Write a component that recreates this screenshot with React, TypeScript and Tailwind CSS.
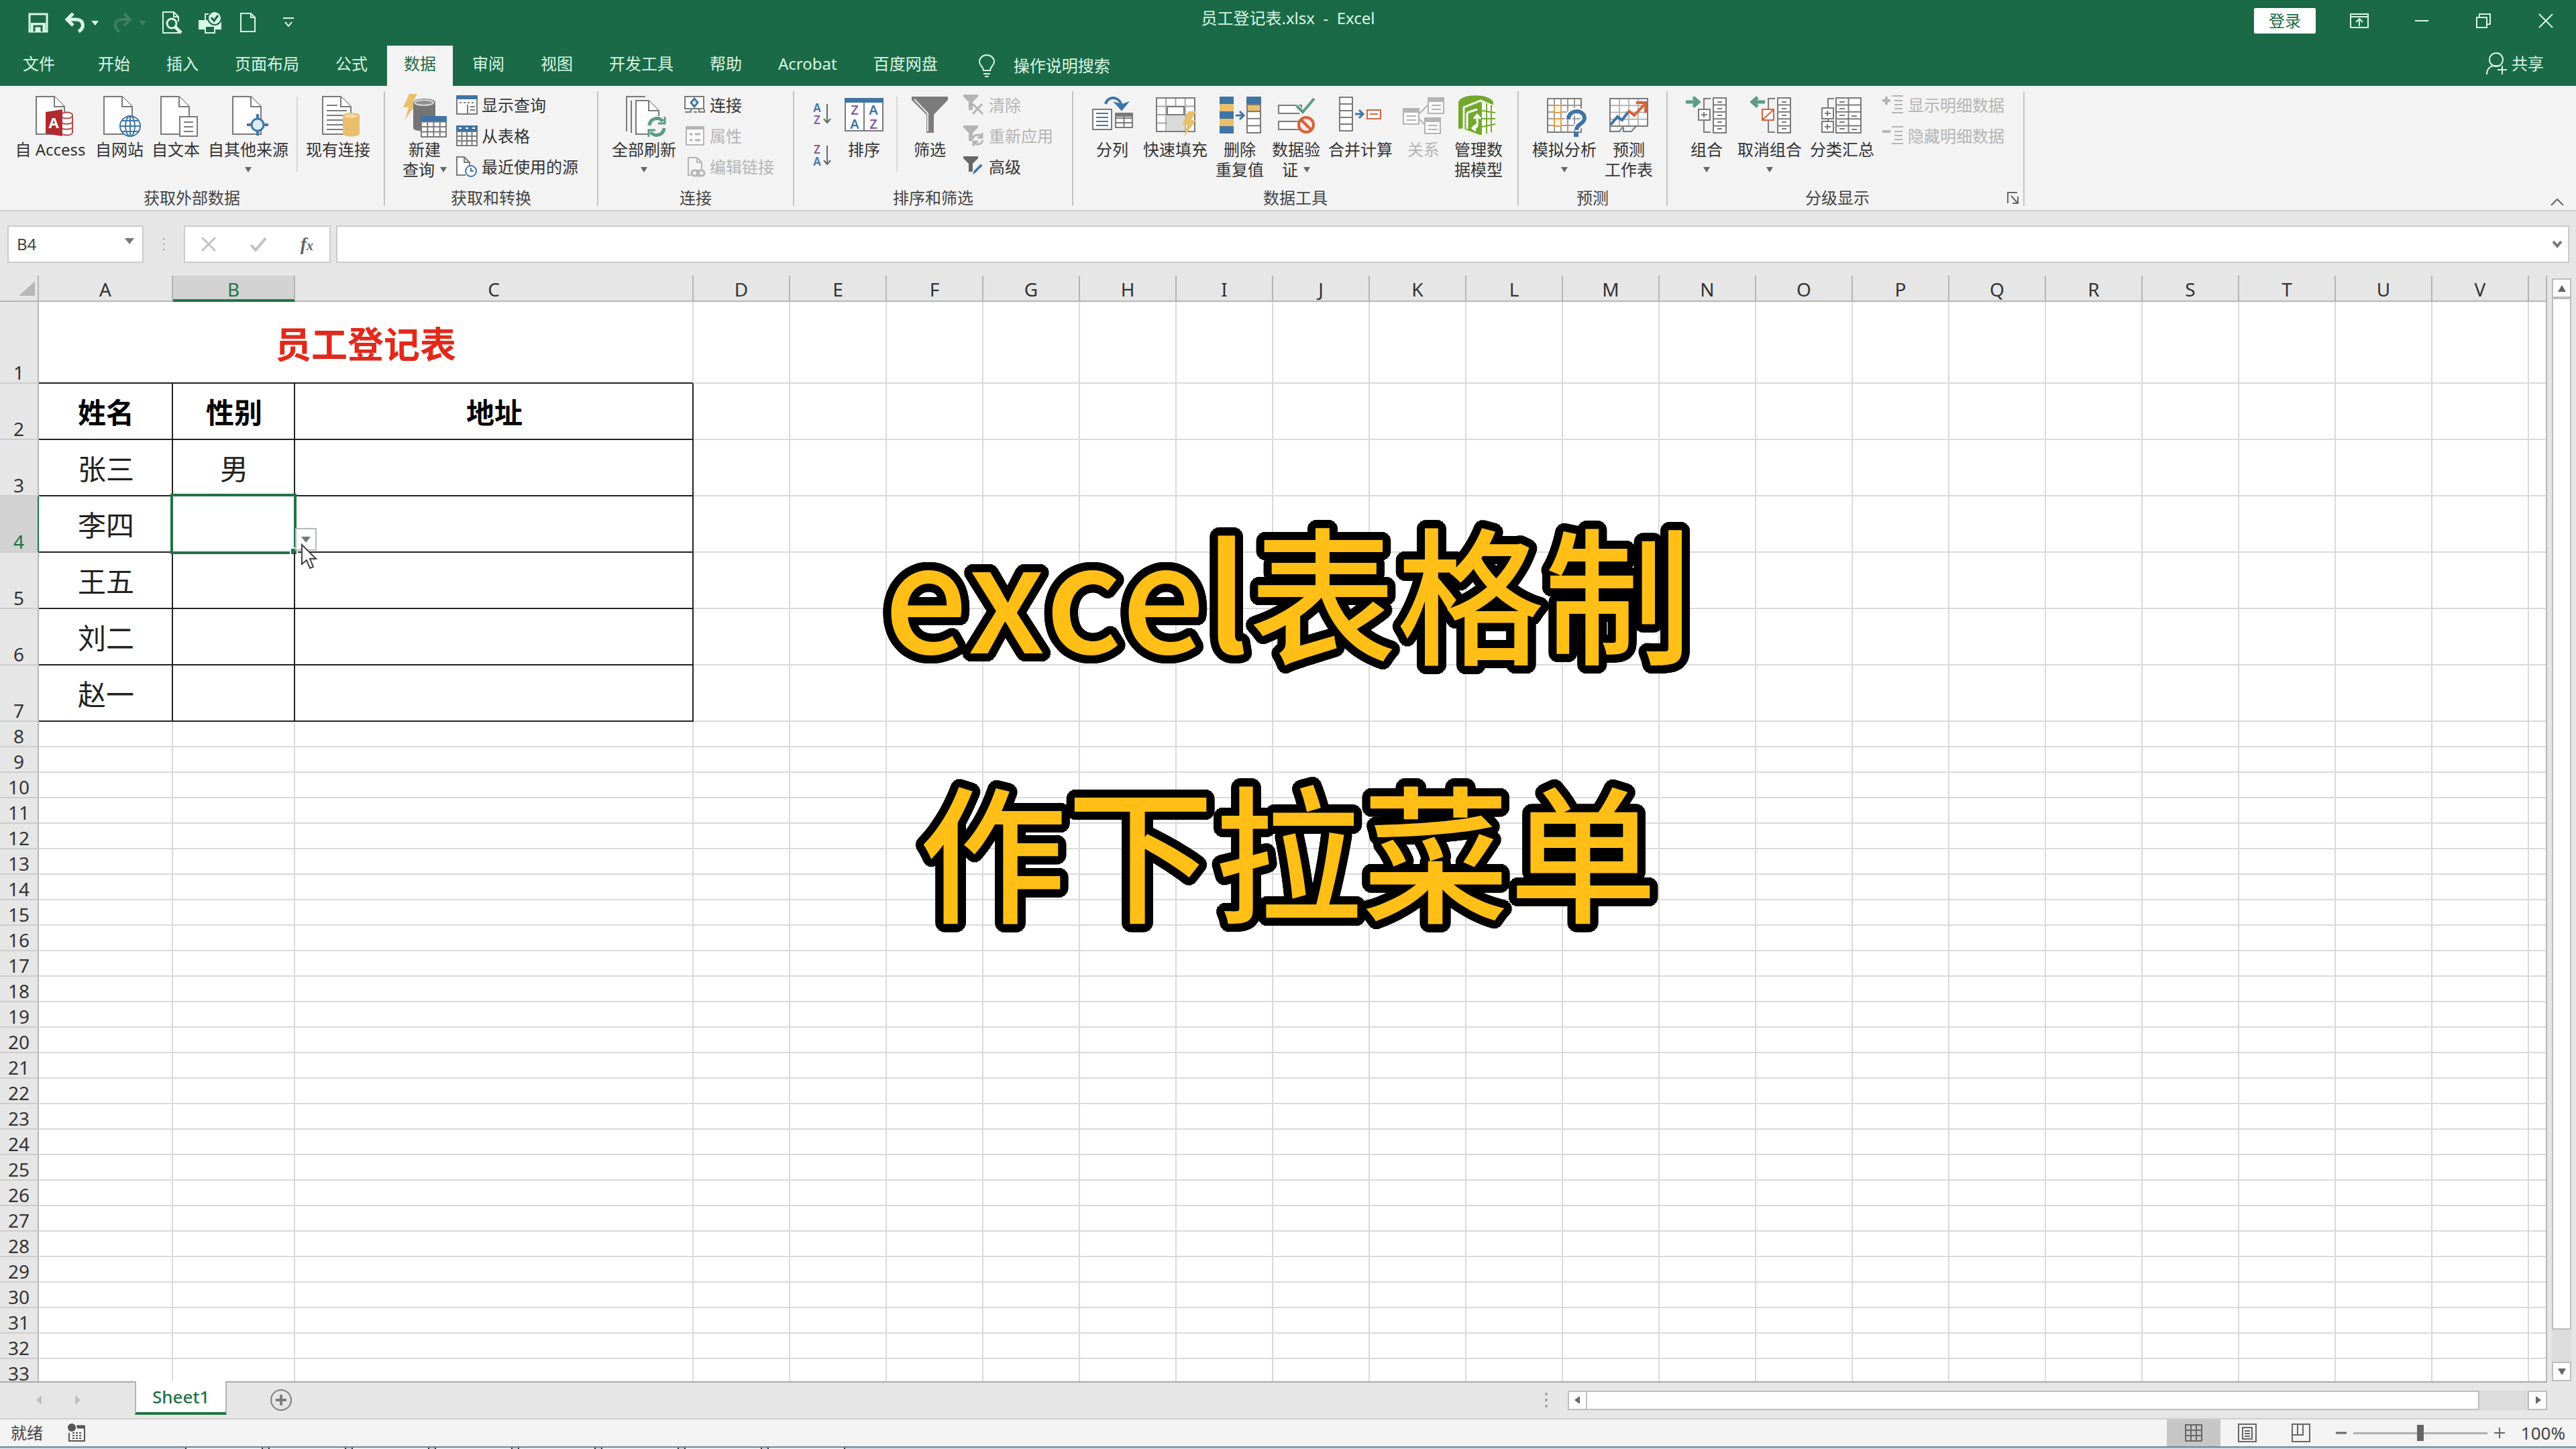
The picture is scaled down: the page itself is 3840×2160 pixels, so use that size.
import type { ReactNode } from "react";

const GRAY = "#7a7a7a";
const BLUE = "#3f74a6";
const GREEN = "#5c9c86";
const ORANGE = "#d4623b";
const YELLOW = "#e9bf6c";
const PALE = "#b4b4b4";

/* ---------- icon building blocks ---------- */

const Icon = ({ children, size = 64 }: { children: ReactNode; size?: number }) => (
	<svg
		width={size}
		height={size}
		viewBox={`0 0 ${size} ${size}`}
		fill="none"
		stroke={GRAY}
		strokeWidth={2}
		className="shrink-0 overflow-visible"
		aria-hidden="true"
	>
		{children}
	</svg>
);

const Doc = ({ x = 9, y = 4, w = 42, h = 56 }) => (
	<g fill="#fff">
		<path d={`M${x} ${y}h${w - 15}l15 15v${h - 15}h-${w}z`} />
		<path d={`M${x + w - 15} ${y}v15h15`} />
	</g>
);

const Lines = ({ x, y, w, n, gap, color = GRAY }: { x: number; y: number; w: number; n: number; gap: number; color?: string }) => (
	<path d={Array.from({ length: n }, (_, i) => `M${x} ${y + i * gap}h${w}`).join("")} stroke={color} />
);

const Grid = ({ x, y, w, h, cols, rows, color = GRAY }: { x: number; y: number; w: number; h: number; cols: number; rows: number; color?: string }) => (
	<g stroke={color}>
		<rect x={x} y={y} width={w} height={h} fill="#fff" />
		{Array.from({ length: cols - 1 }, (_, i) => (
			<path key={`c${i}`} d={`M${x + ((i + 1) * w) / cols} ${y}v${h}`} />
		))}
		{Array.from({ length: rows - 1 }, (_, i) => (
			<path key={`r${i}`} d={`M${x} ${y + ((i + 1) * h) / rows}h${w}`} />
		))}
	</g>
);

const SmallArrow = ({ x, y }: { x: number; y: number }) => (
	<path d={`M${x} ${y}h12M${x + 6} ${y - 6}l6 6l-6 6`} stroke={BLUE} strokeWidth={3} />
);

const Letter = ({ x, y, color, size = 20, children }: { x: number; y: number; color: string; size?: number; children: string }) => (
	<text x={x} y={y} fontSize={size} fontWeight={600} fill={color} stroke="none" textAnchor="middle">
		{children}
	</text>
);

const Bolt = ({ x, y, s = 1 }: { x: number; y: number; s?: number }) => (
	<path transform={`translate(${x} ${y}) scale(${s})`} d="M9 0h12l-7 13h7L3 38l5-18H0z" fill={YELLOW} stroke="none" />
);

const Caret = () => (
	<svg width="10" height="8" viewBox="0 0 10 8" className="inline-block shrink-0" aria-hidden="true">
		<path d="M0 0h10l-5 8z" fill="#666" />
	</svg>
);

/* ---------- large ribbon icons ---------- */

const AccessIcon = () => (
	<Icon>
		<Doc x={11} />
		<g stroke="#b34a4a" fill="#fff">
			<path d="M48 32c0-6 17-6 17 0v25c0 6-17 6-17 0z" />
			<path d="M48 32c0 6 17 6 17 0M48 41c0 5 17 5 17 0M48 49c0 5 17 5 17 0" fill="none" />
		</g>
		<path d="M25 27l25-4v40l-25-4z" fill="#b12a2e" stroke="none" />
		<text x={37} y={51} fontSize={22} fontWeight={700} fill="#fff" stroke="none" textAnchor="middle">A</text>
	</Icon>
);

const WebIcon = () => (
	<Icon>
		<Doc />
		<g stroke={BLUE}>
			<circle cx={48} cy={48} r={15} fill="#fff" />
			<ellipse cx={48} cy={48} rx={7} ry={15} />
			<path d="M48 33v30M33 48h30M36 40h24M36 56h24" />
		</g>
	</Icon>
);

const TextIcon = () => (
	<Icon>
		<Doc x={10} />
		<rect x={38} y={34} width={26} height={29} fill="#fff" />
		<Lines x={44} y={42} w={14} n={3} gap={7} />
	</Icon>
);

const OtherSourceIcon = () => (
	<Icon>
		<Doc />
		<path d="M46 30v32M30 46h32" stroke={BLUE} strokeWidth={4} />
		<circle cx={46} cy={46} r={9} fill="#dcecf7" stroke={BLUE} strokeWidth={3} />
	</Icon>
);

const ExistingIcon = () => (
	<Icon>
		<Doc />
		<Lines x={15} y={17} w={16} n={1} gap={7} />
		<Lines x={15} y={25} w={30} n={5} gap={7} />
		<path d="M39 32c0-5 25-5 25 0v27c0 6-25 6-25 0z" fill={YELLOW} stroke="none" />
		<ellipse cx={51} cy={33} rx={10} ry={3} fill="#f3d9a0" stroke="none" />
	</Icon>
);

const NewQueryIcon = () => (
	<Icon>
		<Bolt x={0} y={0} />
		<path d="M15 13c0-8 33-8 33 0v38c0 6-33 6-33 0z" fill="#757575" stroke="none" />
		<ellipse cx={31} cy={13} rx={14} ry={4} fill="#8f8f8f" stroke="#d9d9d9" />
		<Grid x={27} y={34} w={37} h={30} cols={4} rows={4} />
		<rect x={26} y={33} width={39} height={8} fill={BLUE} stroke="none" />
	</Icon>
);

const RefreshIcon = () => (
	<Icon>
		<path d="M6 56V4h28M13 58V10" />
		<Doc x={20} y={10} w={34} h={50} />
		<circle cx={51} cy={49} r={16} fill="#f3f3f3" stroke="none" />
		<g stroke={GREEN} strokeWidth={5}>
			<path d="M40 47c1-11 15-14 20-6M62 51c-1 11-15 14-20 6" />
			<path d="M63 34v10h-10M39 64v-10h10" strokeWidth={3} />
		</g>
	</Icon>
);

const SortIcon = () => (
	<Icon>
		<rect x={4} y={7} width={56} height={48} fill="#fff" />
		<path d="M32 8v47" />
		<rect x={3} y={6} width={58} height={7} fill={BLUE} stroke="none" />
		<Letter x={18} y={31} color="#8a57a0">Z</Letter>
		<Letter x={18} y={52} color={BLUE}>A</Letter>
		<Letter x={46} y={31} color={BLUE}>A</Letter>
		<Letter x={46} y={52} color="#8a57a0">Z</Letter>
	</Icon>
);

const FilterIcon = () => (
	<Icon>
		<path d="M5 4h54v5L38 31v27H27V31L5 9z" fill="#7b7b7b" stroke="none" />
		<path d="M9 8l20 21v27" stroke="#e8e8e8" />
	</Icon>
);

const SplitIcon = () => (
	<Icon>
		<rect x={3} y={23} width={28} height={30} fill="#fff" />
		<Lines x={8} y={29} w={18} n={4} gap={6} color={BLUE} />
		<Grid x={37} y={29} w={25} h={21} cols={2} rows={3} />
		<rect x={36} y={28} width={27} height={6} fill={GRAY} stroke="none" />
		<path d="M22 15c4-13 21-12 24 3" stroke={BLUE} strokeWidth={4} />
		<path d="M36 13l10 11 9-11-8 3z" fill={BLUE} stroke={BLUE} />
	</Icon>
);

const FlashFillIcon = () => (
	<Icon>
		<Grid x={4} y={6} w={57} h={50} cols={4} rows={4} color="#a5a5a5" />
		<rect x={4} y={6} width={57} height={50} />
		<rect x={20} y={31} width={25} height={24} fill="#dadada" stroke="none" />
		<rect x={20} y={19} width={25} height={12} fill="#fff" />
		<Bolt x={42} y={26} />
	</Icon>
);

const RemoveDupIcon = () => (
	<Icon>
		{[BLUE, YELLOW, BLUE, YELLOW, BLUE].map((c, i) => (
			<rect key={i} x={2} y={4 + i * 11} width={21} height={11} fill={c} stroke="none" />
		))}
		<Grid x={43} y={5} w={20} h={53} cols={1} rows={5} />
		<rect x={42} y={4} width={22} height={11} fill={BLUE} stroke="none" />
		<rect x={43} y={16} width={20} height={10} fill={YELLOW} stroke={GRAY} />
		<SmallArrow x={26} y={32} />
	</Icon>
);

const ValidationIcon = () => (
	<Icon>
		<rect x={6} y={17} width={34} height={12} fill="#fff" />
		<rect x={6} y={41} width={34} height={12} fill="#fff" />
		<path d="M32 18l10 10L59 7" stroke="#f3f3f3" strokeWidth={8} />
		<path d="M33 18l9 9L59 7" stroke={GREEN} strokeWidth={4} />
		<circle cx={47} cy={46} r={11} fill="#fbe9e2" stroke={ORANGE} strokeWidth={4} />
		<path d="M39 38l16 16" stroke={ORANGE} strokeWidth={4} />
	</Icon>
);

const ConsolidateIcon = () => (
	<Icon>
		<Grid x={1} y={5} w={19} h={50} cols={1} rows={5} />
		<SmallArrow x={24} y={30} />
		<rect x={42} y={24} width={20} height={13} fill="#fff" stroke={ORANGE} />
		<path d="M46 30h12" stroke={ORANGE} />
	</Icon>
);

const RelationsIcon = () => (
	<Icon>
		<path d="M25 30l14-14M25 37l10 10" stroke={PALE} />
		{[[2, 22], [39, 6], [34, 36]].map(([x, y]) => (
			<g key={x} stroke={PALE}>
				<rect x={x} y={y} width={23} height={23} fill="#fafafa" />
				<rect x={x} y={y} width={23} height={5} fill={PALE} />
				<path d={`M${x + 5} ${y + 11}h14M${x + 5} ${y + 17}h14`} />
			</g>
		))}
	</Icon>
);

const DataModelIcon = () => (
	<Icon>
		<path d="M2 12c4-13 46-13 52 0v36L2 52z" fill="#72a82c" stroke="none" />
		<path d="M10 20l25-10 23 10v34L35 63 10 54z" fill="#72a82c" stroke="#eef6e0" strokeWidth={3} />
		<path d="M37 12l20 9v32l-20 8z" fill="#fff" stroke="none" />
		<path d="M37 25l20 3M37 37h20M37 49l20-4M44 14v45M51 17v40" stroke="#72a82c" />
		<path d="M15 28l15-5M15 28v24M24 51c8 0 6-6 6-18M25 37l5-6 5 6M28 46l-5 5 5 4" stroke="#fff" strokeWidth={3} />
	</Icon>
);

const WhatIfIcon = () => (
	<Icon>
		<Grid x={7} y={7} w={50} h={50} cols={5} rows={5} color="#9c9c9c" />
		<rect x={7} y={7} width={50} height={50} />
		<rect x={17} y={17} width={10} height={11} fill="#fff3df" stroke="#dda04e" />
		<rect x={17} y={37} width={10} height={11} fill="#fff3df" stroke="#dda04e" />
		<path d="M38 38c0-16 24-15 24-2 0 9-12 8-12 18" stroke="#fff" strokeWidth={11} />
		<path d="M38 38c0-16 24-15 24-2 0 9-12 8-12 18" stroke={BLUE} strokeWidth={6} />
		<rect x={46} y={57} width={7} height={7} fill={BLUE} stroke="none" />
	</Icon>
);

const ForecastIcon = () => (
	<Icon>
		<Grid x={4} y={7} w={56} h={41} cols={4} rows={4} color="#b5b5b5" />
		<rect x={4} y={7} width={56} height={41} />
		<path d="M4 48v8h14l6-8M24 50v6h12l7-8" />
		<path d="M5 46l10-12 7 5 9-12" stroke={BLUE} strokeWidth={4} />
		<path d="M30 28l3-2 7 6L55 16" stroke={ORANGE} strokeWidth={4} />
		<path d="M43 13h14v15" stroke={ORANGE} strokeWidth={4} />
	</Icon>
);

const OutlineCells = ({ x }: { x: number }) => (
	<g>
		<Grid x={x} y={6} w={19} h={52} cols={1} rows={5} />
		<Lines x={x + 6} y={12} w={7} n={5} gap={10} />
	</g>
);

const PlusBox = ({ x, y }: { x: number; y: number }) => (
	<g>
		<rect x={x} y={y} width={17} height={16} fill="#fff" />
		<path d={`M${x + 4} ${y + 8}h9M${x + 8} ${y + 4}v8`} />
	</g>
);

const GroupIcon = () => (
	<Icon>
		<path d="M1 12h18M12 5l8 7-8 7" stroke={GREEN} strokeWidth={5} />
		<path d="M38 7H28v50h10" />
		<PlusBox x={20} y={23} />
		<OutlineCells x={42} />
	</Icon>
);

const UngroupIcon = () => (
	<Icon>
		<path d="M25 12H6M14 5l-8 7 8 7" stroke={GREEN} strokeWidth={5} />
		<path d="M40 7H30v50h10" />
		<rect x={21} y={23} width={17} height={16} fill="#fff" stroke={ORANGE} />
		<path d="M22 38l15-14" stroke={ORANGE} />
		<OutlineCells x={44} />
	</Icon>
);

const SubtotalIcon = () => (
	<Icon>
		<path d="M20 7h-9v50" />
		<PlusBox x={2} y={21} />
		<PlusBox x={2} y={41} />
		<Grid x={23} y={6} w={37} h={52} cols={2} rows={5} />
		<Lines x={28} y={12} w={8} n={5} gap={10} />
		<path d="M46 33h8M46 53h8" />
	</Icon>
);

/* ---------- small ribbon icons ---------- */

const ShowQueriesIcon = () => (
	<Icon size={32}>
		<rect x={1} y={2} width={30} height={27} fill="#fff" />
		<rect x={0} y={1} width={32} height={6} fill={BLUE} stroke="none" />
		<path d="M5 12h22" strokeDasharray="3 3" />
		<path d="M17 15v14M21 18h7M21 23h7" />
	</Icon>
);

const FromTableIcon = () => (
	<Icon size={32}>
		<Grid x={1} y={2} w={30} h={28} cols={4} rows={4} />
		<rect x={0} y={0} width={32} height={9} fill={BLUE} stroke="none" />
		<path d="M4 4h4M14 4h4M24 4h4" stroke="#fff" />
	</Icon>
);

const RecentIcon = () => (
	<Icon size={32}>
		<path d="M14 28H1V1h11l8 8v5M12 1v8h8" fill="#fff" />
		<circle cx={22} cy={22} r={8} fill="#fff" stroke={BLUE} />
		<path d="M22 17v5h4" stroke={BLUE} />
	</Icon>
);

const ConnectionsIcon = () => (
	<Icon size={32}>
		<rect x={1} y={3} width={28} height={18} fill="#fff" />
		<path d="M1 26h9v-4M14 26h5M22 22v4h8v-4" />
		<path d="M15 6l5 6-5 6-5-6z" stroke={BLUE} strokeWidth={3} />
	</Icon>
);

const PropertiesIcon = () => (
	<Icon size={32}>
		<rect x={3} y={2} width={26} height={27} fill="#fafafa" stroke={PALE} />
		<rect x={2} y={1} width={28} height={5} fill={PALE} stroke="none" />
		<path d="M8 13h4M16 13h8M8 22h4M16 22h8" stroke={PALE} strokeWidth={3} />
	</Icon>
);

const EditLinksIcon = () => (
	<Icon size={32}>
		<path d="M10 28H6V2h13l7 7v10M19 2v7h7" stroke={PALE} />
		<rect x={11} y={21} width={11} height={8} rx={4} stroke={PALE} strokeWidth={3} />
		<rect x={19} y={21} width={11} height={8} rx={4} stroke={PALE} strokeWidth={3} />
	</Icon>
);

const SortAzIcon = ({ top, bottom }: { top: string; bottom: string }) => (
	<Icon size={32}>
		<Letter x={10} y={13} size={17} color={top === "A" ? BLUE : "#8a57a0"}>{top}</Letter>
		<Letter x={10} y={31} size={17} color={bottom === "A" ? BLUE : "#8a57a0"}>{bottom}</Letter>
		<path d="M25 1v27M20 23l5 6 5-6" stroke="#666" strokeWidth={2} />
	</Icon>
);

const smallFunnel = "M0 0h22v3l-8 8v12H8V11L0 3z";

const ClearIcon = () => (
	<Icon size={32}>
		<path d={smallFunnel} fill={PALE} stroke="none" />
		<path d="M14 14l15 15M28 14L14 29" stroke={PALE} strokeWidth={3} />
	</Icon>
);

const ReapplyIcon = () => (
	<Icon size={32}>
		<path d={smallFunnel} fill={PALE} stroke="none" />
		<path d="M14 20c2-8 11-7 13-3M29 22c-2 8-11 7-13 3M28 11v7h-7M15 31v-7h7" stroke={PALE} strokeWidth={3} />
	</Icon>
);

const AdvancedIcon = () => (
	<Icon size={32}>
		<path d={smallFunnel} fill="#666" stroke="none" />
		<path d="M12 29l3-8L26 10l4 4-11 11z" fill={BLUE} stroke="#f3f3f3" />
	</Icon>
);

const DetailIcon = ({ plus }: { plus?: boolean }) => (
	<Icon size={32}>
		<path d="M0 9h12" stroke={PALE} strokeWidth={4} />
		{plus && <path d="M6 3v12" stroke={PALE} strokeWidth={4} />}
		<path d="M14 2h17M18 9h12M18 15h12M18 21h12M14 27h17" stroke={PALE} />
	</Icon>
);

/* ---------- ribbon ---------- */

type BigButtonProps = { icon: ReactNode; lines: string[]; caret?: "inline" | "below"; disabled?: boolean; width?: string };

const BigButton = ({ icon, lines, caret, disabled, width = "" }: BigButtonProps) => (
	<button
		type="button"
		disabled={disabled}
		className={`flex flex-col items-center gap-1 px-1.5 text-2xl/[30px] whitespace-nowrap ${width} ${disabled ? "text-[#b4b4b4]" : "text-[#333]"}`}
	>
		{icon}
		<span className="flex flex-col items-center">
			{lines.map((line, i) => (
				<span key={line} className="flex items-center gap-2">
					{line}
					{caret === "inline" && i === lines.length - 1 && <Caret />}
				</span>
			))}
			{caret === "below" && (
				<span className="flex h-[30px] items-center">
					<Caret />
				</span>
			)}
		</span>
	</button>
);

const SmallButton = ({ icon, label, disabled }: { icon: ReactNode; label: string; disabled?: boolean }) => (
	<button
		type="button"
		disabled={disabled}
		className={`flex h-[46px] items-center gap-1.5 text-2xl/[30px] whitespace-nowrap ${disabled ? "text-[#b4b4b4]" : "text-[#333]"}`}
	>
		{icon}
		{label}
	</button>
);

const Separator = () => <div className="mx-1.5 mt-1 h-28 w-0.5 bg-[#d8d8d8]" />;

const Group = ({ label, className, launcher, children }: { label: string; className: string; launcher?: boolean; children: ReactNode }) => (
	<section aria-label={label} className="flex pt-2">
		<div className="flex flex-col">
			<div className={`flex h-36 items-start pt-1 ${className}`}>{children}</div>
			<div className="flex h-[30px] items-center">
				<span className="flex-1 text-center text-2xl/[30px] text-[#444]">{label}</span>
				{launcher && (
					<button type="button" aria-label="分级显示设置" className="mr-1.5">
						<svg width="18" height="18" viewBox="0 0 18 18" fill="none" stroke="#666" strokeWidth={2} aria-hidden="true">
							<path d="M1 17V1h14M6 6l9 10M16 7v10H8" />
						</svg>
					</button>
				)}
			</div>
		</div>
		<div className="mb-1.5 w-0.5 bg-[#c4c4c4]" />
	</section>
);

const Ribbon = () => (
	<div className="flex h-[187px] shrink-0 items-stretch border-b-2 border-[#d0d0d0] bg-[#f3f3f3]">
		<Group label="获取外部数据" className="pr-3.5 pl-3.5">
			<BigButton icon={<AccessIcon />} lines={["自 Access"]} width="min-w-[122px]" />
			<BigButton icon={<WebIcon />} lines={["自网站"]} />
			<BigButton icon={<TextIcon />} lines={["自文本"]} />
			<BigButton icon={<OtherSourceIcon />} lines={["自其他来源"]} caret="below" />
			<Separator />
			<BigButton icon={<ExistingIcon />} lines={["现有连接"]} />
		</Group>
		<Group label="获取和转换" className="gap-2 pr-7 pl-5">
			<BigButton icon={<NewQueryIcon />} lines={["新建", "查询"]} caret="inline" />
			<div className="-mt-1.5 flex flex-col">
				<SmallButton icon={<ShowQueriesIcon />} label="显示查询" />
				<SmallButton icon={<FromTableIcon />} label="从表格" />
				<SmallButton icon={<RecentIcon />} label="最近使用的源" />
			</div>
		</Group>
		<Group label="连接" className="gap-1.5 pr-7 pl-3.5">
			<BigButton icon={<RefreshIcon />} lines={["全部刷新"]} caret="below" />
			<div className="-mt-1.5 flex flex-col">
				<SmallButton icon={<ConnectionsIcon />} label="连接" />
				<SmallButton icon={<PropertiesIcon />} label="属性" disabled />
				<SmallButton icon={<EditLinksIcon />} label="编辑链接" disabled />
			</div>
		</Group>
		<Group label="排序和筛选" className="gap-1 pr-7 pl-6">
			<div className="mr-1.5 flex flex-col gap-[30px] pt-3.5">
				<button type="button" aria-label="升序">
					<SortAzIcon top="A" bottom="Z" />
				</button>
				<button type="button" aria-label="降序">
					<SortAzIcon top="Z" bottom="A" />
				</button>
			</div>
			<BigButton icon={<SortIcon />} lines={["排序"]} />
			<Separator />
			<BigButton icon={<FilterIcon />} lines={["筛选"]} />
			<div className="-mt-1.5 ml-2 flex flex-col">
				<SmallButton icon={<ClearIcon />} label="清除" disabled />
				<SmallButton icon={<ReapplyIcon />} label="重新应用" disabled />
				<SmallButton icon={<AdvancedIcon />} label="高级" />
			</div>
		</Group>
		<Group label="数据工具" className="pr-4 pl-[18px]">
			<BigButton icon={<SplitIcon />} lines={["分列"]} width="min-w-20" />
			<BigButton icon={<FlashFillIcon />} lines={["快速填充"]} />
			<BigButton icon={<RemoveDupIcon />} lines={["删除", "重复值"]} />
			<BigButton icon={<ValidationIcon />} lines={["数据验", "证"]} caret="inline" />
			<BigButton icon={<ConsolidateIcon />} lines={["合并计算"]} />
			<BigButton icon={<RelationsIcon />} lines={["关系"]} disabled width="min-w-20" />
			<BigButton icon={<DataModelIcon />} lines={["管理数", "据模型"]} />
		</Group>
		<Group label="预测" className="px-3.5">
			<BigButton icon={<WhatIfIcon />} lines={["模拟分析"]} caret="below" />
			<BigButton icon={<ForecastIcon />} lines={["预测", "工作表"]} />
		</Group>
		<Group label="分级显示" className="pr-7 pl-[18px]" launcher>
			<BigButton icon={<GroupIcon />} lines={["组合"]} caret="below" width="min-w-20" />
			<BigButton icon={<UngroupIcon />} lines={["取消组合"]} caret="below" />
			<BigButton icon={<SubtotalIcon />} lines={["分类汇总"]} />
			<div className="-mt-1.5 ml-1.5 flex flex-col">
				<SmallButton icon={<DetailIcon plus />} label="显示明细数据" disabled />
				<SmallButton icon={<DetailIcon />} label="隐藏明细数据" disabled />
			</div>
		</Group>
		<button type="button" aria-label="折叠功能区" className="mr-[18px] mb-1.5 ml-auto self-end">
			<svg width="20" height="12" viewBox="0 0 20 12" fill="none" stroke="#666" strokeWidth={2} aria-hidden="true">
				<path d="M1 11l9-9 9 9" />
			</svg>
		</button>
	</div>
);

/* ---------- title bar and tabs ---------- */

const QuickAccess = () => (
	<div className="flex items-center text-[#d9f7e6]">
		<button type="button" aria-label="保存" className="mr-6">
			<svg width="30" height="30" viewBox="0 0 30 30" fill="none" stroke="currentColor" strokeWidth={3} aria-hidden="true">
				<path d="M2 2h26v26H2z" />
				<path d="M4 15h22v13H4z" fill="currentColor" stroke="none" />
				<path d="M9 28v-8h11v8" stroke="#1b6a47" />
				<path d="M13 22v6" />
			</svg>
		</button>
		<button type="button" aria-label="撤消" className="mr-5 flex items-center gap-2">
			<svg width="32" height="30" viewBox="0 0 32 30" fill="none" stroke="currentColor" strokeWidth={5} aria-hidden="true">
				<path d="M4 10h14c12 1 12 13 3 18" />
				<path d="M13 1L4 10l9 9" />
			</svg>
			<svg width="11" height="7" viewBox="0 0 11 7" aria-hidden="true">
				<path d="M0 0h11l-5 7z" fill="currentColor" />
			</svg>
		</button>
		<button type="button" aria-label="恢复" className="mr-6 flex items-center gap-2 text-[#40805f]">
			<svg width="32" height="30" viewBox="0 0 32 30" fill="none" stroke="currentColor" strokeWidth={4} aria-hidden="true">
				<path d="M27 10H14C3 11 2 23 11 28" />
				<path d="M18 1l9 9-9 9" />
			</svg>
			<svg width="11" height="7" viewBox="0 0 11 7" aria-hidden="true">
				<path d="M0 0h11l-5 7z" fill="currentColor" />
			</svg>
		</button>
		<button type="button" aria-label="打印预览" className="mr-6">
			<svg width="30" height="34" viewBox="0 0 30 34" fill="none" stroke="currentColor" strokeWidth={2} aria-hidden="true">
				<path d="M24 28v4H1V1h16l7 7v7M17 1v7h7" />
				<circle cx={14} cy={18} r={7} strokeWidth={3} fill="#1b6a47" />
				<path d="M19 23l9 9" strokeWidth={5} />
			</svg>
		</button>
		<button type="button" aria-label="快速打印" className="mr-7">
			<svg width="34" height="34" viewBox="0 0 34 34" fill="none" stroke="currentColor" strokeWidth={2} aria-hidden="true">
				<path d="M1 14h32v12H1z" fill="currentColor" />
				<path d="M10 14V4h8" />
				<path d="M10 22h14v10H10z" fill="#1b6a47" />
				<circle cx={24} cy={10} r={10} fill="currentColor" stroke="#1b6a47" />
				<path d="M19 9l4 5 6-8" stroke="#1b6a47" strokeWidth={3} />
			</svg>
		</button>
		<button type="button" aria-label="新建" className="mr-10">
			<svg width="24" height="30" viewBox="0 0 24 30" fill="none" stroke="currentColor" strokeWidth={2} aria-hidden="true">
				<path d="M1 1h15l6 6v21H1zM16 1v6h6" />
			</svg>
		</button>
		<button type="button" aria-label="自定义快速访问工具栏">
			<svg width="16" height="16" viewBox="0 0 16 16" fill="none" stroke="currentColor" strokeWidth={2} aria-hidden="true">
				<path d="M0 1h16M3 7l5 6 5-6" />
			</svg>
		</button>
	</div>
);

const WindowButtons = () => (
	<div className="flex items-center justify-end text-[#d9f7e6]">
		<button type="button" className="mr-[51px] h-[38px] rounded-xs bg-white px-[22px] text-2xl/[30px] text-[#1b6a47]">
			登录
		</button>
		<button type="button" aria-label="功能区显示选项" className="mr-[69px]">
			<svg width="28" height="22" viewBox="0 0 28 22" fill="none" stroke="currentColor" strokeWidth={2} aria-hidden="true">
				<path d="M1 1h26v20H1zM1 5h26M14 19V9M9 13l5-5 5 5" />
			</svg>
		</button>
		<button type="button" aria-label="最小化" className="mr-[71px]">
			<svg width="20" height="22" viewBox="0 0 20 22" stroke="currentColor" strokeWidth={2} aria-hidden="true">
				<path d="M0 11h20" />
			</svg>
		</button>
		<button type="button" aria-label="向下还原" className="mr-[71px]">
			<svg width="22" height="22" viewBox="0 0 22 22" fill="none" stroke="currentColor" strokeWidth={2} aria-hidden="true">
				<path d="M1 6h15v15H1zM5 6V1h16v15h-5" />
			</svg>
		</button>
		<button type="button" aria-label="关闭">
			<svg width="22" height="22" viewBox="0 0 22 22" stroke="currentColor" strokeWidth={2} aria-hidden="true">
				<path d="M1 1l20 20M21 1L1 21" />
			</svg>
		</button>
	</div>
);

const tabs = ["开始", "插入", "页面布局", "公式", "数据", "审阅", "视图", "开发工具", "帮助", "Acrobat", "百度网盘"];

const Header = () => (
	<header className="shrink-0 bg-[#1b6a47]">
		<div className="grid h-[68px] grid-cols-[1fr_auto_1fr] items-start px-[34px] pt-3">
			<div className="flex h-11 items-center pl-2">
				<QuickAccess />
			</div>
			<h1 className="text-2xl/[30px] whitespace-pre text-[#d9f7e6]">员工登记表.xlsx  -  Excel</h1>
			<WindowButtons />
		</div>
		<nav className="flex h-[60px] items-stretch gap-1 pr-12 pl-[9px] text-2xl/[30px] text-[#d9f7e6]">
			<button type="button" className="mr-2.5 px-[25px] pb-1.5">文件</button>
			{tabs.map((tab) => (
				<button
					key={tab}
					type="button"
					aria-current={tab === "数据" ? "page" : undefined}
					className={`px-[25px] pb-1.5 ${tab === "数据" ? "bg-[#f3f3f3] text-[#1b6a47]" : ""}`}
				>
					{tab}
				</button>
			))}
			<button type="button" className="flex items-center gap-7 pl-8">
				<svg width="24" height="34" viewBox="0 0 24 34" fill="none" stroke="currentColor" strokeWidth={2} aria-hidden="true">
					<path d="M7 24c0-6-6-7-6-13a11 10 0 0 1 22 0c0 6-6 7-6 13zM7 29h10M9 33h6" />
				</svg>
				操作说明搜索
			</button>
			<button type="button" className="ml-auto flex items-center gap-1.5 pb-1.5">
				<svg width="32" height="34" viewBox="0 0 32 34" fill="none" stroke="currentColor" strokeWidth={2} aria-hidden="true">
					<circle cx={15} cy={11} r={10} />
					<path d="M1 33c0-8 5-13 11-13h6M24 20v13M17 26h14" />
				</svg>
				共享
			</button>
		</nav>
	</header>
);

/* ---------- formula bar ---------- */

const FormulaBar = () => (
	<div className="flex h-24 shrink-0 items-start bg-[#e6e6e6] pt-[21px] pr-2.5 pl-[11px]">
		<div className="flex h-14 w-[203px] items-center border-2 border-[#cbcbcb] bg-white pr-3">
			<input aria-label="名称框" defaultValue="B4" className="w-full min-w-0 flex-1 bg-transparent pl-3 text-2xl text-[#444] outline-none" />
			<button type="button" aria-label="名称列表">
				<svg width="14" height="10" viewBox="0 0 14 10" className="-mt-2" aria-hidden="true">
					<path d="M0 0h14l-7 9z" fill="#777" />
				</svg>
			</button>
		</div>
		<div className="flex h-14 w-[60px] flex-col items-center justify-center gap-1.5">
			<span className="size-0.5 bg-[#999]" />
			<span className="size-0.5 bg-[#999]" />
			<span className="size-0.5 bg-[#999]" />
		</div>
		<div className="mr-2 flex h-14 w-[219px] items-center justify-between border-2 border-[#cbcbcb] bg-white pr-6 pl-6">
			<button type="button" aria-label="取消">
				<svg width="22" height="22" viewBox="0 0 22 22" stroke="#c2c2c2" strokeWidth={3} aria-hidden="true">
					<path d="M1 1l20 20M21 1L1 21" />
				</svg>
			</button>
			<button type="button" aria-label="输入">
				<svg width="26" height="22" viewBox="0 0 26 22" fill="none" stroke="#c2c2c2" strokeWidth={4} aria-hidden="true">
					<path d="M2 12l7 8L24 2" />
				</svg>
			</button>
			<button type="button" aria-label="插入函数" className="font-['Liberation_Serif',serif] text-[28px]/[32px] font-bold text-[#666] italic">
				f<span className="text-xl">x</span>
			</button>
		</div>
		<div className="flex h-14 flex-1 items-center border-2 border-[#cbcbcb] bg-white pr-2">
			<input aria-label="编辑栏" className="h-full flex-1 px-3 text-2xl outline-none" />
			<button type="button" aria-label="展开编辑栏">
				<svg width="16" height="12" viewBox="0 0 16 12" fill="none" stroke="#777" strokeWidth={4} aria-hidden="true">
					<path d="M2 2l6 7 6-7" />
				</svg>
			</button>
		</div>
	</div>
);

/* ---------- sheet ---------- */

const columns = "ABCDEFGHIJKLMNOPQRSTUV".split("");
const people = [
	["张三", "男"],
	["李四", ""],
	["王五", ""],
	["刘二", ""],
	["赵一", ""],
];
const emptyRows = Array.from({ length: 26 }, (_, i) => i + 8);

const gridCell = "border-r-2 border-b-2 border-[#dadada]";
const inkCell = "border-r-2 border-b-2 border-[#222] pt-1 pl-0.5 text-center align-middle";

const RowHead = ({ n, active }: { n: number; active?: boolean }) => (
	<th
		scope="row"
		className={`border-r-2 border-b-2 border-b-[#cdcdcd] text-center align-bottom text-[28px]/[30px] font-normal ${
			active ? "border-r-[#217346] bg-[#d2d2d2] text-[#217346]" : "border-r-[#b5b5b5] bg-[#e6e6e6] text-[#333]"
		}`}
	>
		{n}
	</th>
);

const BlankCells = ({ from }: { from: number }) => (
	<>
		{columns.slice(from).map((c) => (
			<td key={c} className={gridCell} />
		))}
		<td className="border-b-2 border-[#dadada]" />
	</>
);

const Sheet = () => (
	<table className="w-full table-fixed border-separate border-spacing-0">
		<colgroup>
			<col className="w-[58px]" />
			<col className="w-[200px]" />
			<col className="w-[182px]" />
			<col className="w-[594px]" />
			{columns.slice(3).map((c) => (
				<col key={c} className="w-36" />
			))}
			<col />
		</colgroup>
		<thead>
			<tr className="h-[39px] bg-[#e6e6e6] text-[28px]/[30px] text-[#333]">
				<th className="border-r-2 border-b-2 border-[#b5b5b5] p-0">
					<svg width="24" height="22" viewBox="0 0 24 22" className="ml-auto mr-1" aria-hidden="true">
						<path d="M24 0v22H0z" fill="#b8b8b8" />
					</svg>
				</th>
				{columns.map((c) => (
					<th
						key={c}
						scope="col"
						className={`border-r-2 border-[#b5b5b5] p-0 align-bottom font-normal ${c === "B" ? "border-b-4 border-b-[#217346] bg-[#d2d2d2] text-[#217346]" : "border-b-2 pb-0.5"}`}
					>
						{c}
					</th>
				))}
				<th className="border-b-2 border-[#b5b5b5]" />
			</tr>
		</thead>
		<tbody>
			<tr className="h-[122px]">
				<RowHead n={1} />
				<td colSpan={3} className="border-r-2 border-b-2 border-r-[#dadada] border-b-[#222] pt-1.5 text-center align-middle text-[54px]/[72px] font-bold text-[#e2291c]">
					员工登记表
				</td>
				<BlankCells from={3} />
			</tr>
			<tr className="h-[84px] text-[42px]/[56px] font-bold text-black">
				<RowHead n={2} />
				<td className={inkCell}>姓名</td>
				<td className={inkCell}>性别</td>
				<td className={inkCell}>地址</td>
				<BlankCells from={3} />
			</tr>
			{people.map(([name, gender], i) => (
				<tr key={name} className="h-[84px] text-[42px]/[56px] text-[#222]">
					<RowHead n={i + 3} active={i === 1} />
					<td className={inkCell}>{name}</td>
					<td className={`${inkCell} relative`}>
						{gender}
						{i === 1 && (
							<>
								<div className="absolute -inset-1 border-4 border-[#217346]" />
								<div className="absolute -right-1.5 -bottom-1.5 size-3 border-2 border-white bg-[#217346]" />
								<button type="button" aria-label="选择性别" className="absolute top-[47px] left-full ml-0.5 flex h-[34px] w-8 items-center justify-center border-2 border-[#b9b9b9] bg-[#fafdfc]">
									<svg width="14" height="9" viewBox="0 0 14 9" aria-hidden="true">
										<path d="M0 0h14l-7 9z" fill="#777" />
									</svg>
								</button>
								<svg width="26" height="40" viewBox="0 0 26 40" className="absolute top-[70px] left-full z-10 ml-2.5" aria-hidden="true">
									<path d="M2 2v29l7-6 5 12 5-2-5-12h9z" fill="#fff" stroke="#444" strokeWidth={2} />
								</svg>
							</>
						)}
					</td>
					<td className={inkCell} />
					<BlankCells from={3} />
				</tr>
			))}
			{emptyRows.map((n) => (
				<tr key={n} className="h-[38px]">
					<RowHead n={n} />
					<BlankCells from={0} />
				</tr>
			))}
		</tbody>
	</table>
);

const Triangle = ({ d }: { d: string }) => (
	<svg width="14" height="14" viewBox="0 0 14 14" aria-hidden="true">
		<path d={d} fill="#666" />
	</svg>
);

const scrollButton = "flex size-[29px] shrink-0 items-center justify-center border-2 border-[#bdbdbd] bg-white";

const VerticalScroll = () => (
	<div className="flex w-[43px] shrink-0 flex-col items-center bg-[#e6e6e6] pt-1">
		<button type="button" aria-label="向上滚动" className={scrollButton}>
			<Triangle d="M7 2l6 10H1z" />
		</button>
		<div className="flex w-[29px] flex-1 flex-col bg-[#dcdcdc]">
			<div className="h-[97%] border-2 border-[#bdbdbd] bg-white" />
		</div>
		<button type="button" aria-label="向下滚动" className={scrollButton}>
			<Triangle d="M7 12l6-10H1z" />
		</button>
	</div>
);

const SheetBar = () => (
	<div className="flex h-[57px] shrink-0 items-start border-b-2 border-[#cfcfcf] bg-[#e6e6e6] pr-[43px]">
		<div className="flex h-[54px] w-[201px] items-center gap-[50px] border-t-2 border-[#a9a9a9] pl-[54px]">
			<svg width="8" height="14" viewBox="0 0 8 14" aria-hidden="true">
				<path d="M8 0v14L0 7z" fill="#c0c0c0" />
			</svg>
			<svg width="8" height="14" viewBox="0 0 8 14" aria-hidden="true">
				<path d="M0 0v14l8-7z" fill="#c0c0c0" />
			</svg>
		</div>
		<button type="button" className="h-[50px] border-x-2 border-b-4 border-x-[#b5b5b5] border-b-[#217346] bg-white px-6 text-[26px]/[40px] font-medium text-[#217346]">
			Sheet1
		</button>
		<div className="flex h-[54px] flex-1 items-center border-t-2 border-[#a9a9a9] pl-16">
			<button type="button" aria-label="新工作表">
				<svg width="34" height="34" viewBox="0 0 34 34" fill="none" stroke="#7d7d7d" strokeWidth={2} aria-hidden="true">
					<circle cx={17} cy={17} r={15} />
					<path d="M17 9v16M9 17h16" strokeWidth={4} />
				</svg>
			</button>
			<div className="ml-auto flex w-[44%] items-center">
				<svg width="4" height="22" viewBox="0 0 4 22" className="mr-[30px]" aria-hidden="true">
					<path d="M2 0v22" stroke="#999" strokeWidth={3} strokeDasharray="4 5" />
				</svg>
				<button type="button" aria-label="向左滚动" className={scrollButton}>
					<Triangle d="M2 7l8-6v12z" />
				</button>
				<div className="flex h-[29px] flex-1 bg-[#dcdcdc]">
					<div className="-ml-0.5 w-[95%] border-2 border-[#bdbdbd] bg-white" />
				</div>
				<button type="button" aria-label="向右滚动" className={scrollButton}>
					<Triangle d="M12 7L4 1v12z" />
				</button>
			</div>
		</div>
	</div>
);

/* ---------- status bar ---------- */

const StatusBar = () => (
	<footer className="flex h-10 shrink-0 items-center bg-[#f3f3f3] pr-4 pl-4 text-2xl/[30px] text-[#444]">
		<span>就绪</span>
		<button type="button" aria-label="宏录制" className="ml-9">
			<svg width="28" height="28" viewBox="0 0 28 28" fill="none" stroke="#555" strokeWidth={2} aria-hidden="true">
				<path d="M14 4h12v22H3V14" />
				<path d="M15 5h11" strokeWidth={5} />
				<circle cx={7} cy={6} r={6} fill="#555" stroke="none" />
				<path d="M8 14h14M8 18h14M8 22h14" strokeDasharray="3 2" />
			</svg>
		</button>
		<div className="ml-auto flex h-full items-stretch">
			<button type="button" aria-label="普通" aria-pressed="true" className="flex w-20 items-center justify-center bg-[#c6c6c6]">
				<svg width="28" height="28" viewBox="0 0 28 28" fill="none" stroke="#666" strokeWidth={2} aria-hidden="true">
					<path d="M2 2h24v24H2zM10 2v24M18 2v24M2 10h24M2 18h24" />
				</svg>
			</button>
			<button type="button" aria-label="页面布局" className="flex w-20 items-center justify-center">
				<svg width="28" height="28" viewBox="0 0 28 28" fill="none" stroke="#666" strokeWidth={2} aria-hidden="true">
					<path d="M1 1h26v26H1zM7 6h14v17H7zM10 11h8M10 15h8M10 19h8" />
				</svg>
			</button>
			<button type="button" aria-label="分页预览" className="flex w-20 items-center justify-center">
				<svg width="28" height="28" viewBox="0 0 28 28" fill="none" stroke="#666" strokeWidth={2} aria-hidden="true">
					<path d="M1 1h26v26H1zM1 17h16V1M9 1v16" />
				</svg>
			</button>
		</div>
		<button type="button" aria-label="缩小" className="ml-3">
			<svg width="16" height="16" viewBox="0 0 16 16" stroke="#666" strokeWidth={3} aria-hidden="true">
				<path d="M0 8h16" />
			</svg>
		</button>
		<input
			type="range"
			aria-label="显示比例"
			min={0}
			max={200}
			defaultValue={100}
			className="mx-2.5 h-6 w-[200px] appearance-none bg-linear-to-r from-[#b0b0b0] to-[#b0b0b0] bg-[length:100%_3px] bg-center bg-no-repeat [&::-webkit-slider-thumb]:h-6 [&::-webkit-slider-thumb]:w-2.5 [&::-webkit-slider-thumb]:appearance-none [&::-webkit-slider-thumb]:bg-[#666]"
		/>
		<button type="button" aria-label="放大" className="mr-6">
			<svg width="16" height="16" viewBox="0 0 16 16" stroke="#666" strokeWidth={2} aria-hidden="true">
				<path d="M0 8h16M8 0v16" />
			</svg>
		</button>
		<span className="text-[26px]/[30px]">100%</span>
	</footer>
);

/* sliver of the desktop task bar below the window */
const TaskbarEdge = () => (
	<div className="flex h-1 shrink-0 gap-2 border-t-2 border-[#6f8496] bg-[#c3d7e6] pl-[276px]">
		{Array.from({ length: 8 }, (_, i) => (
			<div key={i} className="w-[116px] border-x-2 border-[#333] bg-[#e4eef5]" />
		))}
	</div>
);

/* ring of hard shadows, gives the caption an outline with round corners */
const outline = (radius: number, steps: number) =>
	Array.from({ length: steps }, (_, i) => {
		const angle = (i / steps) * Math.PI * 2;
		return `${(Math.cos(angle) * radius).toFixed(2)}px ${(Math.sin(angle) * radius).toFixed(2)}px 0 #000`;
	}).join(", ");

const captionShadow = `${outline(12, 48)}, ${outline(6, 16)}`;

const App = () => {
	return (
		<div className="relative flex h-screen flex-col overflow-hidden bg-[#e6e6e6] font-['Noto_Sans','Noto_Sans_CJK_SC',sans-serif]">
			<Header />
			<Ribbon />
			<FormulaBar />
			<main className="flex min-h-0 flex-1">
				<div className="min-w-0 flex-1 overflow-hidden border-r-2 border-[#b5b5b5] bg-white">
					<Sheet />
				</div>
				<VerticalScroll />
			</main>
			<SheetBar />
			<StatusBar />
			<TaskbarEdge />

			{/* Video caption */}
			<p
				className="pointer-events-none absolute inset-x-0 top-[686px] text-center font-['Noto_Sans_CJK_SC',sans-serif] text-[220px]/[385px] font-medium text-[#ffbf17] [font-kerning:none]"
				style={{ textShadow: captionShadow }}
			>
				<span className="block">excel表格制</span>
				<span className="block">作下拉菜单</span>
			</p>
		</div>
	);
};

export default App;
